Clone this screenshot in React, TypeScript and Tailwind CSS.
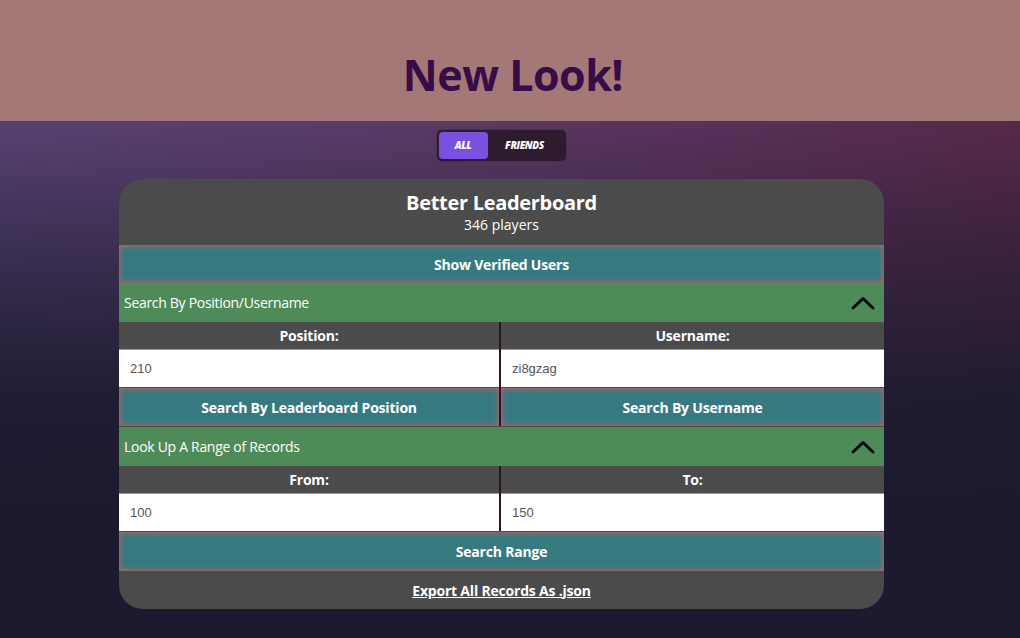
import React from "react";

const font = "font-['Open_Sans','Noto_Sans',sans-serif]";

function TealButton({ children, h = "h-[38px]" }: { children: React.ReactNode; h?: string }) {
  return (
    <div className={`${h} flex items-center justify-center bg-[#367a80] shadow-[inset_0_0_6px_0_#e2585f] text-white font-bold text-[14px] tracking-[-0.2px]`}>
      {children}
    </div>
  );
}

function Chevron() {
  return (
    <svg width="26" height="16" viewBox="0 0 26 16" className="mr-[8px]">
      <path d="M3 13 L13 3.5 L23 13" fill="none" stroke="#000" strokeWidth="2.8" strokeLinecap="round" strokeLinejoin="round" />
    </svg>
  );
}

function GreenHeader({ children }: { children: React.ReactNode }) {
  return (
    <div className="h-[39px] flex items-center justify-between bg-[#4f8a59] pl-[5px] text-white text-[14px] tracking-[-0.3px]">
      <span>{children}</span>
      <Chevron />
    </div>
  );
}

function Field({ label, value, right }: { label: string; value: string; right?: boolean }) {
  return (
    <div className={`flex flex-col ${right ? "border-l-[2px] border-[#2e1428]" : ""}`}>
      <div className="h-[27px] flex items-center justify-center text-white font-bold text-[14px] tracking-[-0.2px]">{label}</div>
      <div className="h-[38px] bg-white border-t border-[#9a9a9a] flex items-center pl-[11px] text-[13px] text-[#555] font-['Liberation_Sans',Arial,sans-serif]">
        {value}
      </div>
    </div>
  );
}

export default function App() {
  return (
    <div
      className={`${font} w-[1020px] h-[638px] overflow-hidden flex flex-col bg-[linear-gradient(180deg,rgba(27,26,46,0)_18%,rgba(27,26,46,0.55)_42%,rgba(27,26,46,0.92)_62%,#1b1a2e_80%),linear-gradient(90deg,#584374_0%,#5c3b68_40%,#58294b_100%)]`}
    >
      <div className="h-[121px] shrink-0 bg-[#a37877] flex items-center justify-center pt-[28px] pl-[6px]">
        <h1 className="text-[43px] font-bold text-[#380c47] tracking-[-0.5px] leading-none">New Look!</h1>
      </div>

      <div className="flex justify-center pt-[8px] pr-[18px]">
        <div className="w-[131px] h-[33px] rounded-[6px] bg-[#2e1b2f] border border-[#4c3149] flex items-center p-[2px] gap-[2px]">
          <div className="w-[49px] h-full rounded-[4px] bg-[#7a50e0] flex items-center justify-center text-white text-[10px] font-extrabold italic tracking-[-0.3px]">
            ALL
          </div>
          <div className="flex-1 flex items-center justify-center text-white text-[10px] font-extrabold italic tracking-[-0.4px] pr-[4px]">
            FRIENDS
          </div>
        </div>
      </div>

      <div className="ml-[119px] mt-[17px] w-[765px] rounded-[24px] bg-[#4b4b4b] overflow-hidden">
        <div className="h-[66px] flex flex-col items-center justify-center text-white">
          <div className="text-[20px] font-bold leading-[26px] tracking-[-0.3px]">Better Leaderboard</div>
          <div className="text-[14px] leading-[20px] -mt-[1px]">346 players</div>
        </div>
        <TealButton>Show Verified Users</TealButton>
        <GreenHeader>Search By Position/Username</GreenHeader>
        <div className="grid grid-cols-[380px_1fr]">
          <Field label="Position:" value="210" />
          <Field label="Username:" value="zi8gzag" right />
          <div className="pt-[1px]">
            <TealButton>Search By Leaderboard Position</TealButton>
          </div>
          <div className="pt-[1px] border-l-[2px] border-[#2e1428]">
            <TealButton>Search By Username</TealButton>
          </div>
        </div>
        <div className="pt-[1px]">
          <GreenHeader>Look Up A Range of Records</GreenHeader>
        </div>
        <div className="grid grid-cols-[380px_1fr]">
          <Field label="From:" value="100" />
          <Field label="To:" value="150" right />
        </div>
        <div className="pt-[1px]">
          <TealButton h="h-[39px]">Search Range</TealButton>
        </div>
        <div className="h-[38px] flex items-center justify-center text-white font-bold text-[14px] underline tracking-[-0.2px]">
          Export All Records As .json
        </div>
      </div>
    </div>
  );
}
